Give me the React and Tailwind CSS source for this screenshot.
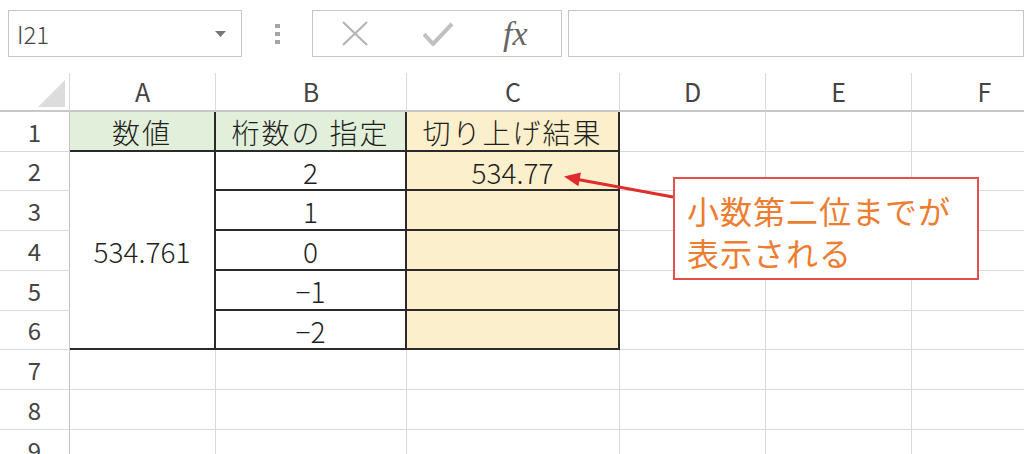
import React from 'react';

/* ══════════════════════ Sheet geometry ══════════════════════ */

const COLS = ['A', 'B', 'C', 'D', 'E', 'F'];

const JP = { fontFamily: '"Noto Sans CJK JP", "Noto Sans", sans-serif' };

const grid = 'border-r border-b border-[#dadada]';
const black = 'border-r-2 border-b-2 border-[#2a2a2a]';

/* ══════════════════════ Formula bar ══════════════════════ */

const FormulaBar = () => (
  <div className="flex items-start h-[73px] pt-[10px] pl-[8px] bg-white">
    <div className="flex items-center justify-between w-[234px] h-[47px] border border-[#c6c6c6] pl-[8px] pr-[15px]">
      <span className="text-[24px] font-light text-[#444] leading-none" style={JP}>I21</span>
      <svg width="11" height="6" viewBox="0 0 11 6"><path d="M0 0h11L5.5 6z" fill="#777" /></svg>
    </div>
    <div className="flex flex-col items-center justify-center gap-[4px] w-[70px] h-[47px]">
      <span className="w-[5px] h-[4px] bg-[#a6a6a6]" />
      <span className="w-[5px] h-[4px] bg-[#a6a6a6]" />
      <span className="w-[5px] h-[4px] bg-[#a6a6a6]" />
    </div>
    <div className="flex items-center w-[250px] h-[47px] border border-[#c6c6c6]">
      <svg className="ml-[28px]" width="28" height="25" viewBox="0 0 28 25">
        <path d="M2 1l24 23M26 1L2 24" stroke="#b4b4b4" strokeWidth="2.2" fill="none" />
      </svg>
      <svg className="ml-[54px]" width="30" height="24" viewBox="0 0 30 24">
        <path d="M1 12l9 10L29 2" stroke="#c0c0c0" strokeWidth="4" fill="none" strokeLinejoin="round" />
      </svg>
      <span
        className="ml-[50px] text-[34px] italic text-[#666] leading-none"
        style={{ fontFamily: '"Liberation Serif", "DejaVu Serif", serif' }}
      >
        fx
      </span>
    </div>
    <div className="ml-[6px] flex-1 h-[47px] border border-[#c6c6c6]" />
  </div>
);

/* ══════════════════════ Spreadsheet ══════════════════════ */

const Sheet = () => {
  const colText = 'flex items-center justify-center text-[25px] leading-none text-[#444]';
  const rowText = 'flex items-center justify-center border-r border-b text-[24px] leading-none text-[#444] border-r-[#c2c2c2] border-b-[#dadada]';
  const cellText = 'flex items-center justify-center pt-[2px] text-[28px] leading-none font-light text-[#1f1f1f]';
  const tan = 'bg-[#fcefcc]';
  const green = 'bg-[#e2efda]';

  return (
    <div
      className="grid grid-cols-[70px_146px_191px_213px_146px_146px_146px] grid-rows-[39px_40px_39px_40px_40px_40px_39px_40px_40px_40px] w-[1058px]"
      style={JP}
    >
      {/* column header row */}
      <div className="relative border-r border-b-2 border-r-[#dadada] border-b-[#c8c8c8]">
        <svg className="absolute left-[38px] top-[7px]" width="27" height="27" viewBox="0 0 27 27">
          <path d="M27 0v27H0z" fill="#dcdcdc" />
        </svg>
      </div>
      {COLS.map(c => (
        <div key={c} className={`${colText} border-r border-b-2 border-r-[#dadada] border-b-[#c8c8c8]`}>{c}</div>
      ))}

      {/* row 1 */}
      <div className={rowText}>1</div>
      <div className={`${cellText} ${black} ${green} tracking-[2px]`}>数値</div>
      <div className={`${cellText} ${black} ${green} tracking-[2px]`}>桁数の 指定</div>
      <div className={`${cellText} ${black} ${tan} tracking-[2px]`}>切り上げ結果</div>
      <div className={grid} /><div className={grid} /><div className={grid} />

      {/* row 2 */}
      <div className={rowText}>2</div>
      <div className={`${cellText} ${black} row-span-5`}>534.761</div>
      <div className={`${cellText} ${black}`}>2</div>
      <div className={`${cellText} ${black} ${tan}`}>534.77</div>
      <div className={grid} /><div className={grid} /><div className={grid} />

      {/* rows 3 – 6 */}
      {['1', '0', '−1', '−2'].map((d, i) => (
        <React.Fragment key={d}>
          <div className={rowText}>{i + 3}</div>
          <div className={`${cellText} ${black}`}>{d}</div>
          <div className={`${black} ${tan}`} />
          <div className={grid} /><div className={grid} /><div className={grid} />
        </React.Fragment>
      ))}

      {/* rows 7 – 9 */}
      {[7, 8, 9].map(r => (
        <React.Fragment key={r}>
          <div className={rowText}>{r}</div>
          <div className={grid} /><div className={grid} /><div className={grid} />
          <div className={grid} /><div className={grid} /><div className={grid} />
        </React.Fragment>
      ))}
    </div>
  );
};

/* ══════════════════════ Callout ══════════════════════ */

const Callout = () => (
  <>
    <svg className="absolute left-0 top-0 pointer-events-none" width="1024" height="454">
      <path d="M673 197L578 179.5" stroke="#e02c2c" strokeWidth="3" fill="none" />
      <path d="M564 176.5L581 172.6L578.4 186.3z" fill="#e02c2c" />
    </svg>
    <div
      className="absolute left-[673px] top-[177px] w-[306px] h-[103px] border-2 border-[#e5504e] bg-white pl-[12px] pt-[10px] text-[32px] leading-[42px] tracking-[1px] text-[#ed7d31]"
      style={JP}
    >
      <div>小数第二位までが</div>
      <div>表示される</div>
    </div>
  </>
);

export default function App() {
  return (
    <div className="relative w-[1024px] h-[454px] overflow-hidden bg-white">
      <FormulaBar />
      <Sheet />
      <Callout />
    </div>
  );
}
